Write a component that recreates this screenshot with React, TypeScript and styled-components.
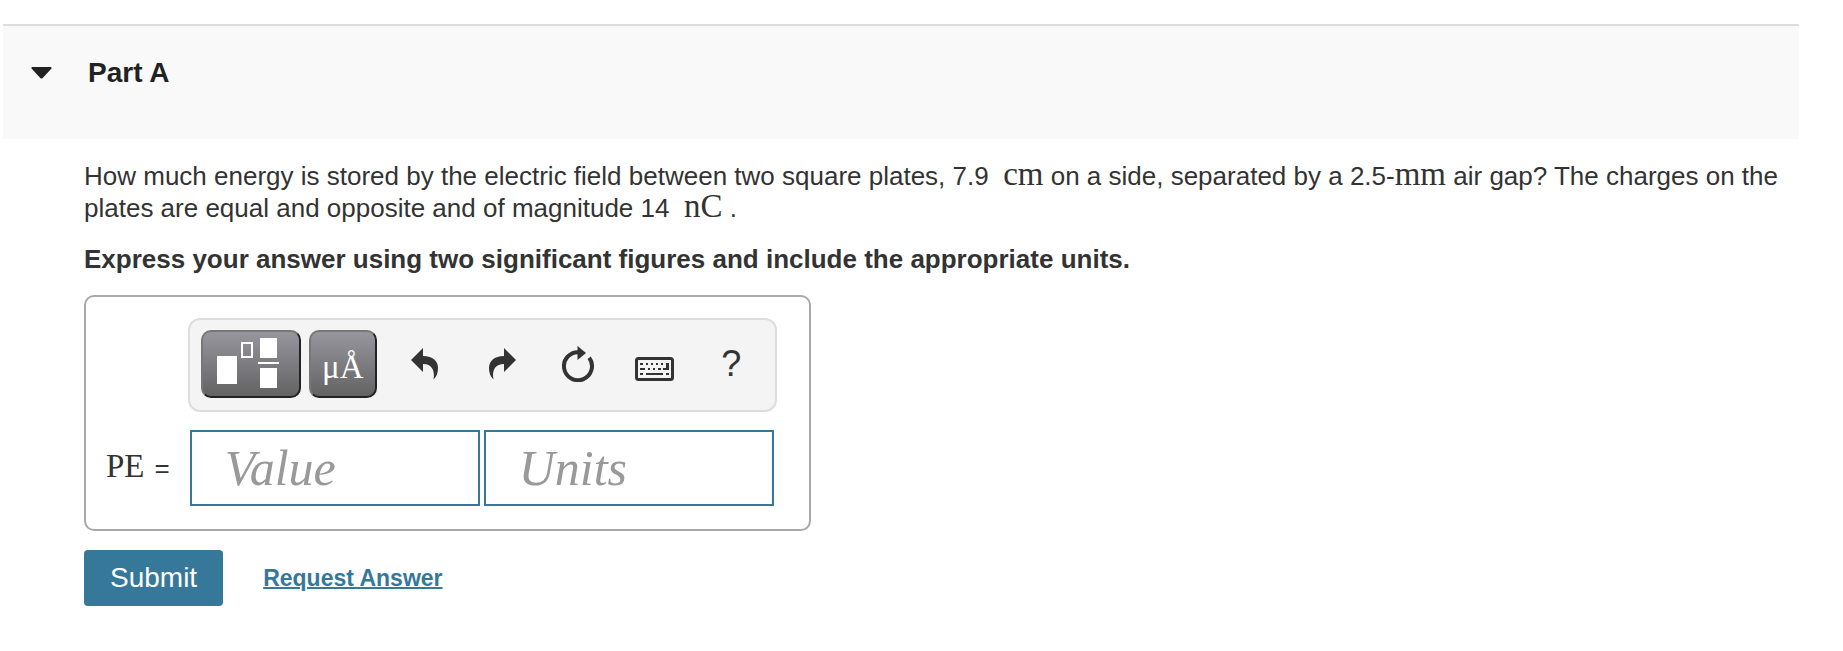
import React from "react";
import styled, { createGlobalStyle } from "styled-components";

const sans = `"Liberation Sans", Arial, sans-serif`;
const serif = `"Liberation Serif", "Times New Roman", serif`;

const GlobalStyle = createGlobalStyle`
  *, *::before, *::after { box-sizing: border-box; }
  body { margin: 0; background: #fff; color: #333; font-family: ${sans}; }
`;

const Page = styled.main`
  padding: 24px 44px 44px 3px;
`;

const PartHeader = styled.header`
  display: flex;
  align-items: flex-start;
  min-height: 115px;
  padding: 31px 28px;
  border-top: 2px solid #ddd;
  background: #f9f9f9;
  color: #222;
`;

const Toggle = styled.button`
  display: flex;
  align-items: center;
  gap: 35px;
  padding: 0;
  border: 0;
  background: none;
  color: inherit;
  font: inherit;
  cursor: pointer;
`;

const PartTitle = styled.span`
  font-size: 28px;
  line-height: 32px;
  font-weight: 700;
`;

const Content = styled.div`
  padding: 21px 0 0 81px;
`;

const Question = styled.p`
  margin: 0 0 19px;
  font-size: 26px;
  line-height: 32px;
`;

const Unit = styled.span`
  font-family: ${serif};
  font-size: 33px;
  line-height: 1px;
`;

const Instruction = styled(Question)`
  margin: 0 0 20px;
  font-weight: 700;
`;

const AnswerBox = styled.div`
  display: grid;
  grid-template-columns: auto auto;
  align-items: center;
  width: fit-content;
  row-gap: 18px;
  column-gap: 18px;
  padding: 21px 32px 23px 20px;
  border: 2px solid #a9a9a9;
  border-radius: 10px;
`;

const Toolbar = styled.div`
  grid-column: 2;
  display: flex;
  align-items: flex-start;
  gap: 8px;
  width: 589px;
  padding: 10px 5px 12px 11px;
  border: 2px solid #ddd;
  border-radius: 12px;
  background: #f4f4f4;
`;

const PaletteButton = styled.button<{ $wide?: boolean }>`
  display: flex;
  align-items: center;
  justify-content: center;
  flex: none;
  width: ${(p) => (p.$wide ? 100 : 68)}px;
  height: 68px;
  padding: ${(p) => (p.$wide ? 0 : 6)}px 0 0;
  border: 2px solid;
  border-color: #777 #222 #222 #777;
  border-radius: 10px;
  background: linear-gradient(#97969e, #636363);
  color: #fff;
  font-family: ${serif};
  font-size: 33px;
  line-height: 36px;
`;

const ToolGroup = styled.div`
  display: flex;
  flex: 1;
  padding-left: 2px;
`;

const ToolButton = styled.button`
  display: flex;
  align-items: center;
  justify-content: center;
  flex: 1;
  height: 68px;
  padding: 0;
  border: 0;
  background: none;
  color: #333;
  font-family: ${sans};
  font-size: 36px;
`;

const FieldLabel = styled.label`
  display: flex;
  align-items: baseline;
  gap: 10px;
  font-size: 26px;
`;

const Fields = styled.div`
  display: flex;
  gap: 4px;
  padding-left: 2px;
`;

const Field = styled.input`
  width: 290px;
  height: 76px;
  padding: 0 33px;
  border: 2px solid #36789a;
  border-radius: 0;
  background: #fff;
  color: #333;
  font-family: ${serif};
  font-size: 50px;
  &::placeholder { color: #999; font-style: italic; opacity: 1; }
`;

const Actions = styled.div`
  display: flex;
  align-items: center;
  gap: 40px;
  margin-top: 19px;
`;

const Submit = styled.button`
  height: 56px;
  padding: 0 26px;
  border: 0;
  border-radius: 4px;
  background: #36789a;
  color: #fff;
  font-family: ${sans};
  font-size: 28px;
`;

const RequestLink = styled.a`
  color: #36789a;
  font-size: 23px;
  font-weight: 700;
  text-decoration: underline;
  text-decoration-thickness: 2px;
`;

const Caret = () => (
  <svg width="22" height="12" viewBox="0 0 22 12" aria-hidden="true">
    <path d="M1.500 0H19.500Q21.500 .5 20 2L11.500 11.200Q10.500 12 9.500 11.200L1 2Q-.5 .5 1.500 0Z" fill="#222" />
  </svg>
);

const Templates = () => (
  <svg width="68" height="52" viewBox="0 0 68 52" fill="#fff" aria-hidden="true">
    <path d="M0 18h20v28H0zM43 0h17v20H43zM41 24h21v2H41zM43 30h17v20H43z" />
    <path d="M25 5h10v14H25z" fill="none" stroke="#fff" strokeWidth="2" />
  </svg>
);

const Undo = () => (
  <svg width="28" height="32" viewBox="0 0 28 32" aria-hidden="true">
    <path d="M0 12 12 0V8C22 8 27 13 27 20C27 25 25.500 29 22.500 31.500C24 24 22 16 12 16V24Z" fill="currentColor" />
  </svg>
);

const Redo = () => (
  <svg width="28" height="32" viewBox="0 0 28 32" aria-hidden="true">
    <path d="M28 12 16 0V8C6 8 1 13 1 20C1 25 2.500 29 5.500 31.500C4 24 6 16 16 16V24Z" fill="currentColor" />
  </svg>
);

const Reset = () => (
  <svg width="32" height="36" viewBox="0 0 32 36" aria-hidden="true">
    <path d="M17 6.200A14 14 0 1 0 27.200 11.800" fill="none" stroke="currentColor" strokeWidth="4" />
    <path d="M15.500 0 24 7 15.500 14Z" fill="currentColor" />
  </svg>
);

const Keyboard = () => (
  <svg width="39" height="36" viewBox="0 -11 39 36" aria-hidden="true">
    <rect x="1.500" y="1.500" width="36" height="21" rx="2" fill="none" stroke="currentColor" strokeWidth="3" />
    <path
      d="M5 6h3v2H5zM11 6h2v2h-2zM16 6h2v2h-2zM21 6h2v2h-2zM26 6h2v2h-2zM31 6h3v7h-6v-2h3V6zM5 11h5v2H5zM13 11h2v2h-2zM18 11h2v2h-2zM23 11h3v2h-3zM5 16h3v2H5zM11 16h17v2H11zM31 16h3v2h-3z"
      fill="currentColor"
    />
  </svg>
);

export default function App() {
  return (
    <>
      <GlobalStyle />
      <Page>
        <PartHeader>
          <Toggle type="button" aria-expanded="true">
            <Caret />
            <PartTitle>Part A</PartTitle>
          </Toggle>
        </PartHeader>
        <Content>
          <Question>
            How much energy is stored by the electric field between two square plates, 7.9 &nbsp;
            <Unit>cm</Unit> on a side, separated by a 2.5-<Unit>mm</Unit> air gap? The charges on the plates are
            equal and opposite and of magnitude 14 &nbsp;<Unit>nC</Unit> .
          </Question>
          <Instruction>
            Express your answer using two significant figures and include the appropriate units.
          </Instruction>
          <AnswerBox>
            <Toolbar role="toolbar" aria-label="Equation tools">
              <PaletteButton type="button" $wide aria-label="Templates"><Templates /></PaletteButton>
              <PaletteButton type="button">μÅ</PaletteButton>
              <ToolGroup>
                <ToolButton type="button" aria-label="Undo"><Undo /></ToolButton>
                <ToolButton type="button" aria-label="Redo"><Redo /></ToolButton>
                <ToolButton type="button" aria-label="Reset"><Reset /></ToolButton>
                <ToolButton type="button" aria-label="Keyboard"><Keyboard /></ToolButton>
                <ToolButton type="button">?</ToolButton>
              </ToolGroup>
            </Toolbar>
            <FieldLabel htmlFor="value"><Unit>PE</Unit>=</FieldLabel>
            <Fields>
              <Field id="value" placeholder="Value" />
              <Field aria-label="Units" placeholder="Units" />
            </Fields>
          </AnswerBox>
          <Actions>
            <Submit type="button">Submit</Submit>
            <RequestLink href="#">Request Answer</RequestLink>
          </Actions>
        </Content>
      </Page>
    </>
  );
}
